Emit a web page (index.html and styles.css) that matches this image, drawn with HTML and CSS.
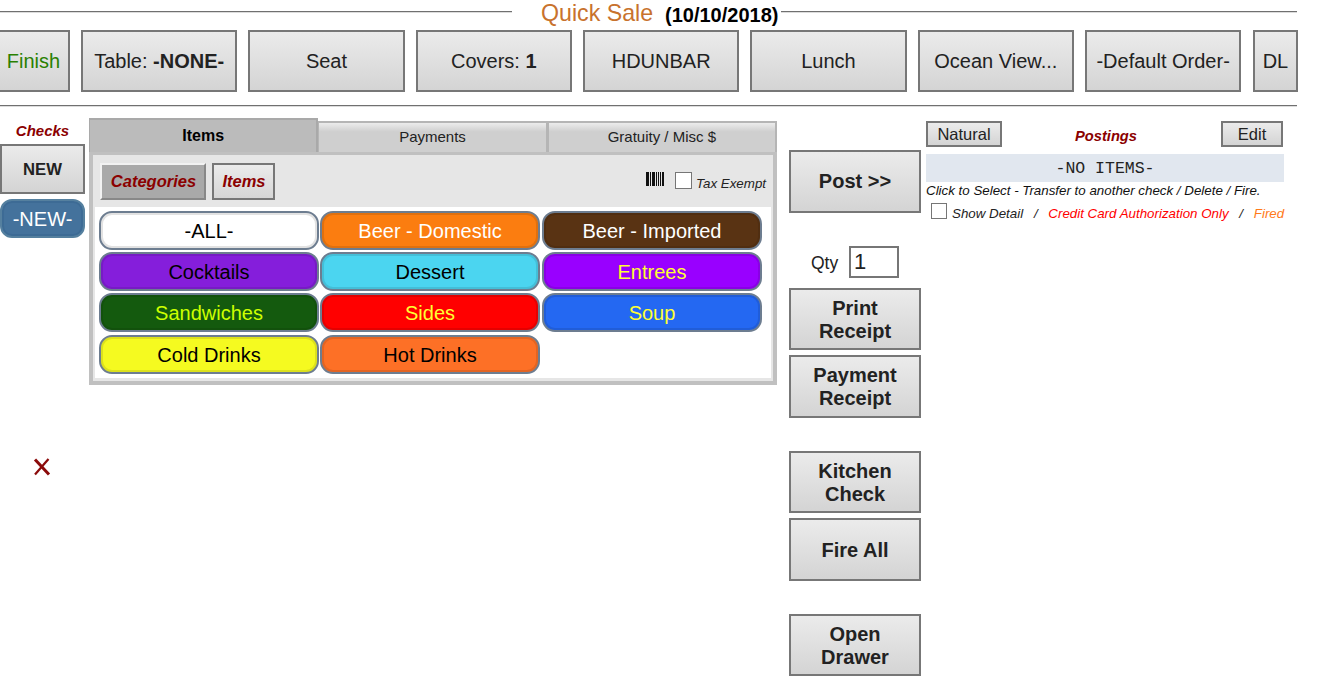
FILE: index.html
```html
<!DOCTYPE html>
<html lang="en">
<head>
<meta charset="utf-8">
<title>Quick Sale</title>
<link rel="stylesheet" href="styles.css">
</head>
<body>
<div class="page">
  <header class="title-row">
    <div class="rule rule-left"></div>
    <h1 class="title"><span class="title-name">Quick Sale</span> <b class="title-date">(10/10/2018)</b></h1>
    <div class="rule rule-right"></div>
  </header>
  <nav class="toolbar">
    <button class="btn tool tool-finish"><span class="green">Finish</span></button>
    <button class="btn tool">Table: <b>-NONE-</b></button>
    <button class="btn tool">Seat</button>
    <button class="btn tool">Covers: <b>1</b></button>
    <button class="btn tool">HDUNBAR</button>
    <button class="btn tool">Lunch</button>
    <button class="btn tool">Ocean View...</button>
    <button class="btn tool">-Default Order-</button>
    <button class="btn tool tool-dl">DL</button>
  </nav>
  <div class="hr"></div>
  <main class="main">
    <section class="checks">
      <div class="label-red checks-label">Checks</div>
      <button class="btn new-btn">NEW</button>
      <button class="check-pill">-NEW-</button>
      <svg class="x-mark" width="18" height="18" viewBox="0 0 18 18" aria-hidden="true"><path d="M2 1.5 L16 16.5" stroke="#8b0a0a" stroke-width="3" fill="none"/><path d="M15.5 1 L2 16.5" stroke="#8b0a0a" stroke-width="2.2" fill="none"/></svg>
    </section>
    <section class="center">
      <div class="tabs">
        <div class="tab tab-active">Items</div>
        <div class="tab">Payments</div>
        <div class="tab">Gratuity / Misc $</div>
      </div>
      <div class="panel">
        <div class="panel-bar">
          <button class="mode mode-on">Categories</button>
          <button class="mode">Items</button>
          <div class="tax">
            <svg class="barcode" width="18" height="14" viewBox="0 0 18 14" aria-hidden="true"><path d="M0 0h3v14H0zM4 0h1v14H4zM6 0h3v14H6zM10 0h1v14h-1zM12 0h1v14h-1zM14 0h1v14h-1zM16 0h2v14h-2z" fill="#111"/></svg>
            <span class="box tax-box"></span>
            <i class="tax-label">Tax Exempt</i>
          </div>
        </div>
        <div class="cats">
          <button class="cat" style="background:#fff;color:#000;box-shadow:inset 0 0 0 2px #e2e2e2">-ALL-</button>
          <button class="cat" style="background:#fb7d10;color:#fff;box-shadow:inset 0 0 0 2px #e0700e">Beer - Domestic</button>
          <button class="cat" style="background:#593313;color:#fff;box-shadow:inset 0 0 0 2px #502e11">Beer - Imported</button>
          <button class="cat" style="background:#851edb;color:#000;box-shadow:inset 0 0 0 2px #771bc5">Cocktails</button>
          <button class="cat" style="background:#4bd5f0;color:#000;box-shadow:inset 0 0 0 2px #43bfd8">Dessert</button>
          <button class="cat" style="background:#9900ff;color:#ffff33;box-shadow:inset 0 0 0 2px #8900e5">Entrees</button>
          <button class="cat" style="background:#145a0e;color:#ccff00;box-shadow:inset 0 0 0 2px #12510c">Sandwiches</button>
          <button class="cat" style="background:#ff0000;color:#ffff33;box-shadow:inset 0 0 0 2px #e50000">Sides</button>
          <button class="cat" style="background:#2468f2;color:#ffff33;box-shadow:inset 0 0 0 2px #205dd9">Soup</button>
          <button class="cat" style="background:#f5fa20;color:#000;box-shadow:inset 0 0 0 2px #dce11c">Cold Drinks</button>
          <button class="cat" style="background:#fd7026;color:#000;box-shadow:inset 0 0 0 2px #e36422">Hot Drinks</button>
        </div>
      </div>
    </section>
    <section class="actions">
      <button class="btn act act-post">Post &gt;&gt;</button>
      <div class="qty"><label class="qty-label">Qty</label><span class="qty-input">1</span></div>
      <button class="btn act">Print<br>Receipt</button>
      <button class="btn act gap-s">Payment<br>Receipt</button>
      <button class="btn act gap-l">Kitchen<br>Check</button>
      <button class="btn act gap-s">Fire All</button>
      <button class="btn act gap-l">Open<br>Drawer</button>
    </section>
    <section class="postings">
      <div class="post-head">
        <button class="btn small nat">Natural</button>
        <div class="label-red post-label">Postings</div>
        <button class="btn small edit">Edit</button>
      </div>
      <div class="no-items">-NO ITEMS-</div>
      <div class="hint">Click to Select - Transfer to another check / Delete / Fire.</div>
      <div class="legend">
        <span class="box detail-box"></span>
        <i>Show Detail</i>
        <i class="sep">/</i>
        <i class="red">Credit Card Authorization Only</i>
        <i class="sep">/</i>
        <i class="orange">Fired</i>
      </div>
    </section>
  </main>
</div>
</body>
</html>
```

FILE: styles.css
```css
* { box-sizing: border-box; }
html, body { margin: 0; padding: 0; background: #fff; }
body { font-family: "Liberation Sans", Arial, sans-serif; color: #222; }
button { font-family: inherit; cursor: pointer; margin: 0; padding: 0; }
.page { width: 1324px; height: 678px; overflow: hidden; }

.title-row { display: flex; height: 30px; align-items: flex-start; }
.rule { height: 1px; margin-top: 11px; background: #707070; box-shadow: 0 1px 0 #dcdcdc; }
.rule-left { width: 512px; }
.rule-right { width: 516px; }
.title { margin: 0 2px 0 29px; width: 238px; font-weight: normal; line-height: 26px; white-space: nowrap; height: 26px; }
.title-name { font-size: 23.2px; color: #c8722d; margin-right: 3px; position: relative; top: -3px; }
.title-date { font-size: 20px; color: #000; font-weight: bold; position: relative; top: -2px; }

.btn {
  border: 2px solid #777;
  background: linear-gradient(#ebebeb, #d4d4d4);
  color: #222;
  font-size: 20px;
}
.toolbar { display: flex; gap: 11px; margin-left: -3px; height: 62px; }
.tool { width: 156.33px; height: 62px; flex: none; }
.tool-finish { width: 73px; }
.tool-dl { width: 45px; margin-left: 0.67px; }
.green { color: #2a8000; }
.hr { width: 1297px; height: 1px; margin-top: 13px; margin-bottom: 1px; background: #707070; box-shadow: 0 1px 0 #dcdcdc; }

.main { display: flex; align-items: flex-start; }

.label-red { color: #8b0000; font-weight: bold; font-style: italic; font-size: 15px; line-height: 18px; }
.checks { width: 85px; flex: none; margin-right: 4px; display: flex; flex-direction: column; padding-top: 15px; }
.checks-label { text-align: center; margin-bottom: 4px; }
.new-btn { height: 50px; width: 85px; font-size: 16.7px; font-weight: bold; padding-top: 2px; }
.check-pill {
  margin-top: 5px; width: 85px; height: 39px; border-radius: 12px; padding-top: 2px;
  border: 2px solid #55809f; background: #44729c; box-shadow: inset 0 0 0 2px #3d6b95; color: #fff; font-size: 20px;
}
.x-mark { margin: 220px 0 0 33px; display: block; }

.center { width: 688px; flex: none; margin-right: 12px; padding-top: 11px; }
.tabs { display: flex; height: 34px; align-items: flex-end; }
.tab {
  flex: 1 1 0; height: 31px; border: 2px solid #b5b5b5; border-bottom: 0; border-left-width: 1px;
  background: linear-gradient(#ececec, #cfcfcf 30%, #cfcfcf);
  color: #222; font-size: 15px; line-height: 27px; text-align: center;
}
.tab-active {
  height: 34px; background: #bbb; border-color: #a9a9a9; color: #000;
  font-weight: bold; font-size: 16px; line-height: 32px;
}
.panel { height: 233px; border: 4px solid #c0c0c0; background: #e6e6e6; padding: 0 2px 3px; border-top-width: 3px; }
.panel-bar { height: 52px; display: flex; align-items: flex-start; padding: 8px 0 0 5px; }
.mode {
  height: 37px; width: 63px; margin-right: 6px; border: 2px solid #777; padding-left: 1px;
  background: linear-gradient(#ebebeb, #d6d6d6); color: #8b0000;
  font-size: 16.5px; font-weight: bold; font-style: italic;
}
.mode-on { width: 106px; background: #a9a9a9; border-color: #f2f2f2 #888 #888 #f2f2f2; }
.tax { margin-left: auto; display: flex; align-items: flex-start; padding: 9px 5px 0 0; }
.barcode { margin-top: 0; }
.box { display: block; background: #fff; border: 1px solid #767676; width: 17px; height: 17px; flex: none; }
.tax-box { margin-left: 11px; }
.tax-label { margin-left: 4px; font-size: 13.33px; line-height: 24px; color: #222; }
.cats {
  height: 171px; background: #fff; padding: 4px 0 0 4px;
  display: grid; grid-template-columns: 221px 222px 220px; grid-template-rows: 41px 41px 42px 39px; align-content: start;
}
.cat {
  height: 39px; width: 220px; border: 2px solid #6d7d90; border-radius: 13px; font-size: 20px; padding-top: 1px;
}

.actions { width: 132px; flex: none; margin-right: 5px; padding-top: 43px; display: flex; flex-direction: column; }
.act { height: 62.5px; width: 132px; font-weight: bold; font-size: 20px; line-height: 23px; flex: none; padding-top: 2px; }
.act-post { padding-top: 0; }
.gap-s { margin-top: 5px; }
.gap-l { margin-top: 33px; }
.qty { display: flex; align-items: center; height: 32px; margin: 33px 0 10px; padding-left: 22px; }
.qty-label { font-size: 17.5px; width: 38px; color: #222; padding-top: 3px; }
.qty-input {
  display: block; width: 50px; height: 32px; border: 2px solid #767676;
  font-size: 22px; line-height: 28px; padding-left: 3px; color: #222; background: #fff;
}

.postings { width: 358px; flex: none; padding-top: 14px; }
.post-head { display: flex; justify-content: space-between; align-items: flex-start; height: 26px; padding-right: 1px; }
.small { height: 26px; font-size: 16.5px; line-height: 20px; }
.nat { width: 76px; }
.edit { width: 62px; }
.post-label { margin: 6px 11px 0 0; font-size: 14.7px; }
.no-items {
  margin-top: 7px; height: 28px; background: #e1e7ef; color: #222; text-align: center;
  font-family: "Liberation Mono", "Courier New", monospace; font-size: 16.5px; line-height: 29px;
}
.hint { font-style: italic; font-size: 13.33px; line-height: 17px; color: #111; white-space: nowrap; }
.legend { display: flex; align-items: flex-start; padding: 4px 0 0 5px; font-size: 13.33px; line-height: 22px; white-space: nowrap; color: #222; }
.detail-box { width: 16px; height: 16px; margin-right: 5px; }
.sep { margin: 0 10.75px; }
.red { color: #ff0000; }
.orange { color: #ff7a1a; }
```
